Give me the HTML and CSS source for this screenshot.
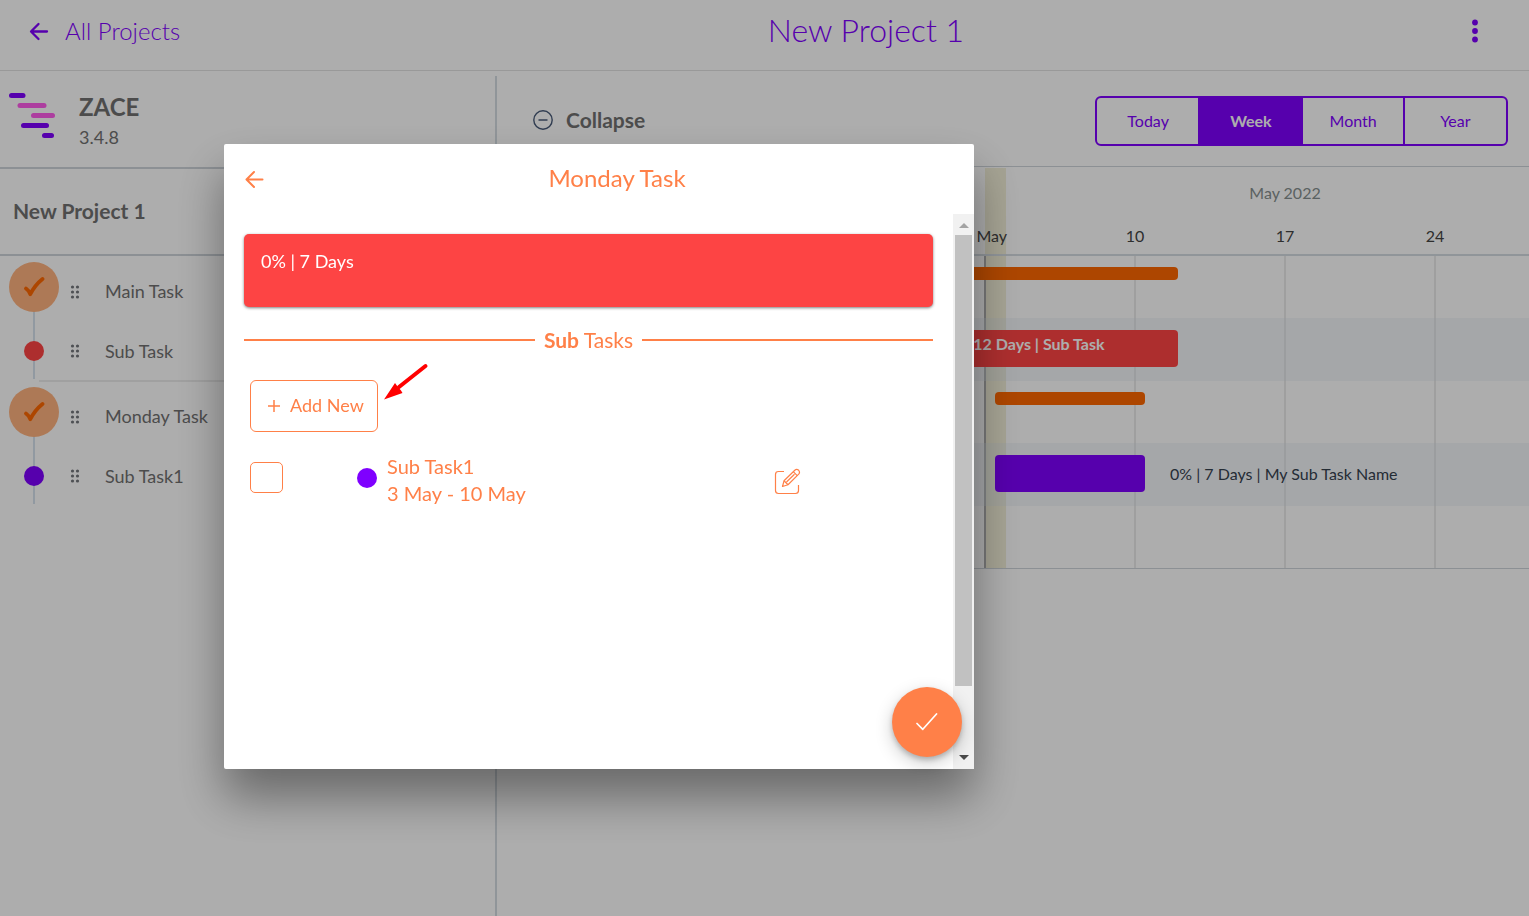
FILE: index.html
```html
<!DOCTYPE html>
<html lang="en">
<head>
<meta charset="utf-8">
<title>New Project 1</title>
<link rel="stylesheet" href="styles.css">
</head>
<body>
<div class="app">
  <header class="topbar">
    <a class="topbar-back" href="#">
      <svg width="20" height="20" viewBox="0 0 20 20" aria-hidden="true"><path d="M18 10.500H2.500M9.500 3L2 10.500L9.500 18" fill="none" stroke="currentColor" stroke-width="2.300" stroke-linecap="round" stroke-linejoin="round"/></svg>
      <span>All Projects</span>
    </a>
    <h1 class="topbar-title">New Project 1</h1>
    <div class="topbar-end">
      <button class="icon-button" type="button" aria-label="Menu">
        <svg width="8" height="24" viewBox="0 0 8 24" aria-hidden="true"><circle cx="4" cy="3.500" r="2.900"/><circle cx="4" cy="12" r="2.900"/><circle cx="4" cy="20.500" r="2.900"/></svg>
      </button>
    </div>
  </header>

  <main class="workspace">
    <aside class="sidebar">
      <div class="brand">
        <svg class="brand-logo" width="48" height="48" viewBox="0 0 48 48" aria-hidden="true">
          <g class="logo-dark"><rect x="0" y="1" width="16.500" height="5" rx="2.500"/><rect x="12" y="31" width="28" height="5" rx="2.500"/><rect x="33" y="41" width="12" height="5" rx="2.500"/></g>
          <g class="logo-light"><rect x="8.500" y="11" width="29" height="5" rx="2.500"/><rect x="22" y="21" width="24" height="5" rx="2.500"/></g>
        </svg>
        <div class="brand-text">
          <div class="brand-name">ZACE</div>
          <div class="brand-version">3.4.8</div>
        </div>
      </div>
      <h2 class="project-name">New Project 1</h2>
      <section class="group">
        <div class="task">
          <span class="task-check"><svg width="22" height="22" viewBox="0 0 22 22" aria-hidden="true"><path d="M3 12.500Q6.500 15 7.300 18.200Q12 9 19.500 3" fill="none" stroke="currentColor" stroke-width="3.800" stroke-linecap="round" stroke-linejoin="round"/></svg></span>
          <svg class="grip" width="10" height="14" viewBox="0 0 10 14" aria-hidden="true"><circle cx="2.500" cy="2" r="1.600"/><circle cx="7.500" cy="2" r="1.600"/><circle cx="2.500" cy="7" r="1.600"/><circle cx="7.500" cy="7" r="1.600"/><circle cx="2.500" cy="12" r="1.600"/><circle cx="7.500" cy="12" r="1.600"/></svg>
          <span>Main Task</span>
        </div>
        <div class="task task-sub">
          <span class="dot dot-red"></span>
          <svg class="grip" width="10" height="14" viewBox="0 0 10 14" aria-hidden="true"><circle cx="2.500" cy="2" r="1.600"/><circle cx="7.500" cy="2" r="1.600"/><circle cx="2.500" cy="7" r="1.600"/><circle cx="7.500" cy="7" r="1.600"/><circle cx="2.500" cy="12" r="1.600"/><circle cx="7.500" cy="12" r="1.600"/></svg>
          <span>Sub Task</span>
        </div>
        <div class="group-rule"></div>
      </section>
      <section class="group">
        <div class="task">
          <span class="task-check"><svg width="22" height="22" viewBox="0 0 22 22" aria-hidden="true"><path d="M3 12.500Q6.500 15 7.300 18.200Q12 9 19.500 3" fill="none" stroke="currentColor" stroke-width="3.800" stroke-linecap="round" stroke-linejoin="round"/></svg></span>
          <svg class="grip" width="10" height="14" viewBox="0 0 10 14" aria-hidden="true"><circle cx="2.500" cy="2" r="1.600"/><circle cx="7.500" cy="2" r="1.600"/><circle cx="2.500" cy="7" r="1.600"/><circle cx="7.500" cy="7" r="1.600"/><circle cx="2.500" cy="12" r="1.600"/><circle cx="7.500" cy="12" r="1.600"/></svg>
          <span>Monday Task</span>
        </div>
        <div class="task task-sub">
          <span class="dot dot-purple"></span>
          <svg class="grip" width="10" height="14" viewBox="0 0 10 14" aria-hidden="true"><circle cx="2.500" cy="2" r="1.600"/><circle cx="7.500" cy="2" r="1.600"/><circle cx="2.500" cy="7" r="1.600"/><circle cx="7.500" cy="7" r="1.600"/><circle cx="2.500" cy="12" r="1.600"/><circle cx="7.500" cy="12" r="1.600"/></svg>
          <span>Sub Task1</span>
        </div>
      </section>
    </aside>

    <section class="schedule">
      <div class="toolbar">
        <button class="collapse" type="button">
          <svg width="20" height="20" viewBox="0 0 20 20" aria-hidden="true"><circle cx="10" cy="10" r="9.200" fill="none" stroke="currentColor" stroke-width="1.400"/><path d="M5.500 10h9" stroke="currentColor" stroke-width="1.500"/></svg>
          <span>Collapse</span>
        </button>
        <div class="segment">
          <button class="segment-item" type="button">Today</button>
          <button class="segment-item is-active" type="button">Week</button>
          <button class="segment-item" type="button">Month</button>
          <button class="segment-item" type="button">Year</button>
        </div>
      </div>
      <div class="timeline">
        <div class="today"><span></span></div>
        <div class="timeline-body">
          <div class="dates">
            <div class="month"><span>May 2022</span></div>
            <div class="weeks">
              <span>19</span><span>26</span><span>3 May</span><span>10</span><span>17</span><span>24</span>
            </div>
          </div>
          <div class="chart">
            <div class="gridlines"><i></i><i></i><i></i><i class="month-start"></i><i></i><i></i><i></i></div>
            <div class="lanes">
              <div class="lane"><div class="bar bar-main" style="margin-left:424px;width:257px"></div></div>
              <div class="lane lane-alt"><div class="bar bar-red" style="margin-left:424px;width:257px">0% | 12 Days | Sub Task</div></div>
              <div class="lane"><div class="bar bar-main" style="margin-left:498px;width:150px"></div></div>
              <div class="lane lane-alt"><div class="bar bar-purple" style="margin-left:498px;width:150px"></div><span class="bar-label">0% | 7 Days | My Sub Task Name</span></div>
              <div class="lane"></div>
            </div>
          </div>
        </div>
      </div>
    </section>
  </main>
</div>

<div class="backdrop"></div>

<div class="modal" role="dialog" aria-labelledby="modal-title">
  <header class="modal-head">
    <button class="icon-button modal-back" type="button" aria-label="Back">
      <svg width="20" height="20" viewBox="0 0 20 20" aria-hidden="true"><path d="M18.500 10.500H3M10 3L2.500 10.500L10 18" fill="none" stroke="currentColor" stroke-width="2" stroke-linecap="round" stroke-linejoin="round"/></svg>
    </button>
    <h2 class="modal-title" id="modal-title">Monday Task</h2>
  </header>
  <div class="modal-main">
    <div class="modal-content">
      <div class="progress-card">0% | 7 Days</div>
      <h3 class="divider"><span><b>Sub</b> Tasks</span></h3>
      <div class="subtasks">
        <button class="add-new" type="button">
          <svg width="12" height="12" viewBox="0 0 12 12" aria-hidden="true"><path d="M6 0v12M0 6h12" stroke="currentColor" stroke-width="1.500"/></svg>
          <span>Add New</span>
        </button>
        <div class="subtask">
          <input class="subtask-done" id="done-1" type="checkbox">
          <span class="dot dot-violet"></span>
          <label class="subtask-text" for="done-1">Sub Task1<br>3 May - 10 May</label>
          <button class="icon-button" type="button" aria-label="Edit Sub Task1">
            <svg width="27" height="27" viewBox="0 0 27 27" aria-hidden="true"><g fill="none" stroke="currentColor" stroke-width="1.200" stroke-linejoin="round"><path d="M10 3.500H4.500Q1.500 3.500 1.500 6.500V22.500Q1.500 25.500 4.500 25.500H21.500Q24.500 25.500 24.500 22.500V17"/><path d="M8.500 18.500L10 12.800L20.800 2.200Q22.700 0.500 24.700 2.300Q26.300 4.200 24.700 6.100L14 16.700Z"/><path d="M10 12.800L14 16.700M19.300 3.700L23.200 7.600M12.500 14L20.500 6.200"/></g></svg>
          </button>
        </div>
      </div>
    </div>
    <div class="scrollbar" aria-hidden="true">
      <svg width="10" height="5" viewBox="0 0 10 5"><path d="M0 5L5 0L10 5Z" fill="#a3a3a3"/></svg>
      <div class="scrollbar-thumb"></div>
      <svg width="10" height="5" viewBox="0 0 10 5"><path d="M0 0L5 5L10 0Z" fill="#4a4a4a"/></svg>
    </div>
  </div>
  <button class="fab" type="button" aria-label="Save">
    <svg width="22" height="18" viewBox="0 0 22 18" aria-hidden="true"><path d="M1 10.500L6.800 16.300L20.500 1" fill="none" stroke="currentColor" stroke-width="1.700" stroke-linecap="round" stroke-linejoin="round"/></svg>
  </button>
  <svg class="pointer" width="46" height="40" viewBox="0 0 46 40" aria-hidden="true"><path d="M41.500 4L15 25" stroke="#f00" stroke-width="4" stroke-linecap="round"/><path d="M0 37.500L11 21L13.500 24.500L17 28.500L18.500 31Z" fill="#f00"/></svg>
</div>
</body>
</html>
```
FILE: styles.css
```css
* { box-sizing: border-box; }

body {
  margin: 0;
  background: #fff;
  color: #717171;
  font-family: Lato, "Open Sans", sans-serif;
  font-size: 18px;
}

h1, h2, h3 { margin: 0; font-weight: 400; }
svg { display: block; flex: none; }

button {
  margin: 0;
  padding: 0;
  border: 0;
  background: none;
  color: inherit;
  font: inherit;
}

.app { display: flex; flex-direction: column; min-height: 100vh; }

/* Top bar */
.topbar {
  display: flex;
  align-items: center;
  height: 71px;
  padding-bottom: 8px;
  border-bottom: 1px solid #e2e2e2;
  color: #7f00ff;
}
.topbar-back {
  display: flex;
  align-items: center;
  gap: 16px;
  width: 277px;
  padding-left: 29px;
  color: inherit;
  font-size: 24px;
  font-weight: 300;
  text-decoration: none;
}
.topbar-back span { padding-bottom: 2px; }
.topbar-title { flex: 1; padding-bottom: 4px; text-align: center; font-size: 32px; font-weight: 300; }
.topbar-end { display: flex; width: 74px; padding-left: 16px; }
.icon-button { display: flex; fill: currentColor; }

/* Sidebar */
.workspace { display: flex; flex: 1; padding-top: 5px; }
.sidebar { flex: none; width: 497px; border-right: 2px solid #d5dce2; }
.brand {
  display: flex;
  align-items: center;
  gap: 22px;
  height: 93px;
  padding: 0 9px 4px;
  border-bottom: 2px solid #ced4da;
}
.brand-logo { margin-bottom: 8px; }
.brand-text { padding-top: 3px; }
.logo-dark { fill: #7f00ff; }
.logo-light { fill: #ff5ceb; }
.brand-name { line-height: 32px; font-size: 24px; font-weight: 700; }
.brand-version { line-height: 28px; font-size: 18px; }
.project-name {
  display: flex;
  align-items: center;
  height: 87px;
  padding: 0 13px 2px;
  border-bottom: 2px solid #ced4da;
  font-size: 21px;
  font-weight: 700;
}
.group { position: relative; height: 125px; padding-top: 6px; }
.group::before {
  content: "";
  position: absolute;
  z-index: -1;
  left: 33px;
  top: 54px;
  bottom: 2px;
  width: 2px;
  background: #d6e2ee;
}
.group-rule { height: 2px; margin-left: 39px; background: #ececec; }
.task {
  display: grid;
  grid-template-columns: 50px 10px 1fr;
  column-gap: 11px;
  align-items: center;
  height: 60px;
  padding-left: 9px;
}
.task > :last-child { padding: 0 0 2px 14px; }
.task-sub { height: 58px; }
.task-sub > :last-child { padding-bottom: 0; }
.task-check {
  display: grid;
  place-items: center;
  align-self: start;
  height: 50px;
  border-radius: 50%;
  background: #ffb37f;
  color: #ff6800;
}
.dot { flex: none; width: 20px; height: 20px; border-radius: 50%; justify-self: center; }
.dot-red { background: #ff4545; }
.dot-purple, .dot-violet { background: #7f00ff; }
.grip { fill: #74777c; }

/* Schedule */
.schedule { flex: 1; min-width: 0; }
.toolbar {
  display: flex;
  align-items: center;
  justify-content: space-between;
  height: 91px;
  padding: 0 21px 0 36px;
  border-bottom: 1px solid #ced4da;
}
.collapse { display: flex; align-items: center; gap: 13px; padding-bottom: 2px; color: #485a78; font-size: 21px; font-weight: 700; }
.collapse span { padding-bottom: 2px; color: #717171; }
.segment {
  display: grid;
  grid-template-columns: repeat(4, 1fr);
  width: 413px;
  height: 50px;
  overflow: hidden;
  border: 2px solid #7f00ff;
  border-radius: 6px;
}
.segment-item { padding-bottom: 2px; color: #7f00ff; font-size: 16px; }
.segment-item + .segment-item { margin-left: -1px; border-left: 2px solid #7f00ff; }
.segment-item.is-active { background: #7f00ff; color: #fff; font-weight: 700; }

.timeline { display: grid; overflow: hidden; border-bottom: 1px solid #ced4da; }
.today, .timeline-body { grid-area: 1 / 1; min-width: 0; }
.today { display: flex; padding: 1px 0 0 488px; }
.today span { width: 21px; background: #f4f1da; }
.timeline-body { z-index: 1; }
.dates { height: 89px; padding-top: 11px; border-bottom: 2px solid #d5dce2; }
.month { display: flex; padding-left: 713px; color: #86908f; font-size: 16px; line-height: 30px; }
.month span { width: 150px; text-align: center; }
.weeks { display: flex; padding-left: 113px; color: #444; font-size: 16px; line-height: 56px; }
.weeks span { flex: none; width: 150px; text-align: center; }
.chart { display: grid; height: 312px; }
.gridlines, .lanes { grid-area: 1 / 1; min-width: 0; }
.gridlines { display: flex; padding-left: 37px; }
.gridlines i { flex: none; width: 150px; border-left: 2px solid #eaeaea; }
.gridlines .month-start { border-color: #b0b0b0; }
.lanes { display: grid; grid-template-rows: repeat(5, 1fr); }
.lane { display: flex; align-items: start; padding-top: 11px; }
.lane-alt { padding-top: 12px; background: rgba(220, 230, 240, 0.3); }
.bar { flex: none; height: 37px; border-radius: 4px; }
.bar-main { height: 13px; background: #ff6800; }
.bar-red { padding-left: 18px; background: #ff4545; color: #fff; font-size: 16px; font-weight: 700; line-height: 27px; }
.bar-purple { background: #7f00ff; }
.bar-label { margin-left: 25px; color: #36424f; font-size: 16px; line-height: 38px; white-space: nowrap; }

/* Dialog */
.backdrop { position: fixed; inset: 0; z-index: 2; background: rgba(0, 0, 0, 0.32); }
.modal {
  position: fixed;
  z-index: 3;
  top: 144px;
  left: 224px;
  display: flex;
  flex-direction: column;
  width: 750px;
  height: 625px;
  border-radius: 2px;
  background: #fff;
  box-shadow: 0 28px 48px rgba(0, 0, 0, 0.4);
  color: #ff8048;
}
.modal-head { display: flex; align-items: center; height: 70px; padding-left: 20px; }
.modal-back { width: 16px; }
.modal-title { flex: 1; padding-bottom: 3px; text-align: center; font-size: 24px; }
.modal-main { display: flex; flex: 1; min-height: 0; }
.modal-content { flex: 1; padding: 20px; }
.progress-card {
  height: 73px;
  padding: 13px 17px;
  border-radius: 5px;
  background: #fd4444;
  box-shadow: 0 1px 3px rgba(0, 0, 0, 0.5);
  color: #fff;
  line-height: 28px;
}
.divider { display: flex; align-items: center; gap: 9px; height: 66px; font-size: 21px; }
.divider span { padding-bottom: 2px; }
.divider::before, .divider::after { content: ""; flex: 1; height: 2px; background: #ff8048; }
.subtasks { padding: 7px 6px; }
.add-new {
  display: flex;
  align-items: center;
  gap: 10px;
  width: 128px;
  height: 52px;
  padding-left: 17px;
  border: 1px solid #ff8048;
  border-radius: 6px;
}
.add-new span { padding-bottom: 2px; }
.subtask { display: flex; align-items: center; margin-top: 21px; font-size: 20px; line-height: 27px; }
.subtask-done {
  appearance: none;
  width: 33px;
  height: 31px;
  margin: 0 74px 5px 0;
  border: 1px solid #ff8048;
  border-radius: 5px;
}
.subtask .dot { margin-bottom: 5px; }
.subtask-text { width: 387px; margin-left: 10px; }
.subtask .icon-button { padding-top: 3px; }

.scrollbar {
  display: flex;
  flex-direction: column;
  align-items: center;
  width: 21px;
  padding: 9px 2px;
  background: #f1f1f1;
}
.scrollbar-thumb { width: 17px; height: 451px; margin: 7px 0 auto; background: #c1c1c1; }

.fab {
  position: absolute;
  right: 12px;
  bottom: 12px;
  display: grid;
  place-items: center;
  width: 70px;
  height: 70px;
  border-radius: 50%;
  background: #ff8048;
  box-shadow: 0 3px 5px rgba(0, 0, 0, 0.2), 0 6px 18px rgba(0, 0, 0, 0.2);
  color: #fff;
}
.pointer { position: absolute; top: 218px; left: 160px; }
```
